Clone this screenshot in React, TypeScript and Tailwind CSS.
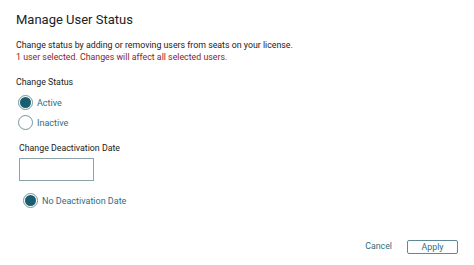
import React, { useState } from 'react';

const Radio = ({ checked, label, onClick }: { checked: boolean; label: string; onClick: () => void }) => (
  <button type="button" onClick={onClick} className="flex items-center gap-[4px] text-[9px] leading-[14px] text-[#2e6e7e]">
    <span className="w-[15px] h-[15px] rounded-full border border-[#6f97a0] flex items-center justify-center">
      {checked && <span className="w-[11px] h-[11px] rounded-full bg-[#185d70]" />}
    </span>
    {label}
  </button>
);

export default function App() {
  const [status, setStatus] = useState<'active' | 'inactive'>('active');
  const [noDate, setNoDate] = useState(true);

  return (
    <div className="w-[474px] h-[265px] bg-white text-[#222] flex flex-col px-4 pt-[12px] pb-[11px]" style={{ fontFamily: 'Roboto, "Liberation Sans", sans-serif' }}>
      <h1 className="text-[13px] leading-[16px]">Manage User Status</h1>
      <p className="mt-[11px] text-[8.8px] leading-[12px]">Change status by adding or removing users from seats on your license.</p>
      <p className="text-[8.8px] leading-[12px] text-[#8a1c2b]">1 user selected. Changes will affect all selected users.</p>

      <div className="mt-[13px] text-[8.8px] leading-[12px]">Change Status</div>
      <div className="mt-[7px] ml-[2px] flex flex-col gap-[5px]">
        <Radio checked={status === 'active'} label="Active" onClick={() => setStatus('active')} />
        <Radio checked={status === 'inactive'} label="Inactive" onClick={() => setStatus('inactive')} />
      </div>

      <div className="mt-[12px] ml-[3px] text-[8.8px] leading-[12px]">Change Deactivation Date</div>
      <input className="mt-[4px] ml-[3px] w-[75px] h-[23px] border border-[#8aa2a8] outline-none text-[10px] px-1" />

      <div className="mt-[12px] ml-[7px]">
        <Radio checked={noDate} label="No Deactivation Date" onClick={() => setNoDate(!noDate)} />
      </div>

      <div className="mt-auto flex justify-end items-center gap-[15px]">
        <button type="button" className="text-[8.8px] text-[#2e6e7e]">Cancel</button>
        <button type="button" className="w-[51px] h-[14px] border border-[#5d8a96] rounded-[2px] text-[8.8px] leading-[12px] text-[#2e6e7e]">Apply</button>
      </div>
    </div>
  );
}
